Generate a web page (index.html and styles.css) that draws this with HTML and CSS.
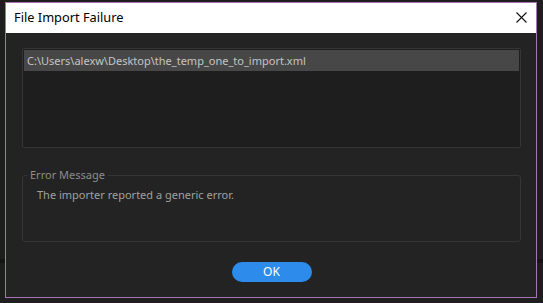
FILE: index.html
```html
<!DOCTYPE html>
<html>
<head>
<meta charset="utf-8">
<link rel="stylesheet" href="styles.css">
</head>
<body>
<div class="window">
  <div class="titlebar">
    <span class="title">File Import Failure</span>
    <svg class="close" width="11" height="11" viewBox="0 0 11 11"><path d="M0.5 0.5 L10.5 10.5 M10.5 0.5 L0.5 10.5" stroke="#111" stroke-width="1.1" fill="none"/></svg>
  </div>
  <div class="content">
    <div class="listbox">
      <div class="row selected">C:\Users\alexw\Desktop\the_temp_one_to_import.xml</div>
    </div>
    <div class="group">
      <span class="legend">Error Message</span>
      <div class="message">The importer reported a generic error.</div>
    </div>
    <div class="actions">
      <button class="ok">OK</button>
    </div>
  </div>
</div>
</body>
</html>
```
FILE: styles.css
```css
html, body {
  margin: 0;
  padding: 0;
  width: 543px;
  height: 303px;
  overflow: hidden;
  font-family: "Noto Sans", "Open Sans", sans-serif;
}
body {
  background: linear-gradient(to bottom, #1e1e1e 259px, #141414 259px, #141414 263px, #1e1e1e 263px);
}
.window {
  margin: 2px 0 0 5px;
  width: 530px;
  height: 294px;
  border: 1px solid #a874b4;
  background: #232323;
  display: flex;
  flex-direction: column;
}
.titlebar {
  height: 30px;
  background: #ffffff;
  display: flex;
  align-items: center;
  justify-content: space-between;
  padding: 0 9px 0 8px;
}
.title {
  font-size: 12.8px;
  color: #000;
  position: relative;
  top: -1px;
}
.close {
  display: block;
  margin-top: -1px;
}
.content {
  flex: 1;
  padding: 15px 15px 0 16px;
  display: flex;
  flex-direction: column;
}
.listbox {
  box-sizing: border-box;
  height: 100px;
  border: 1px solid #353535;
  border-radius: 2px;
  background: #1e1e1e;
  padding: 1px;
}
.row {
  height: 21px;
  line-height: 21px;
  padding-left: 3px;
  font-size: 11px;
  color: #c4c4c4;
}
.selected {
  background: #474747;
}
.group {
  position: relative;
  box-sizing: border-box;
  margin-top: 27px;
  height: 67px;
  border: 1px solid #353535;
  border-radius: 3px;
  padding: 11px 0 0 14px;
}
.legend {
  position: absolute;
  left: 4px;
  top: -8px;
  padding: 0 3px;
  background: #232323;
  font-size: 11px;
  line-height: 14px;
  color: #8c8c8c;
}
.message {
  font-size: 11px;
  line-height: 15px;
  color: #a0a0a0;
}
.actions {
  display: flex;
  justify-content: center;
  margin-top: 20px;
}
.ok {
  width: 80px;
  height: 20px;
  border: none;
  border-radius: 10px;
  background: #2d8ceb;
  color: #ffffff;
  font-family: "Noto Sans", "Open Sans", sans-serif;
  font-size: 12px;
  padding: 0;
  line-height: 20px;
}
```
